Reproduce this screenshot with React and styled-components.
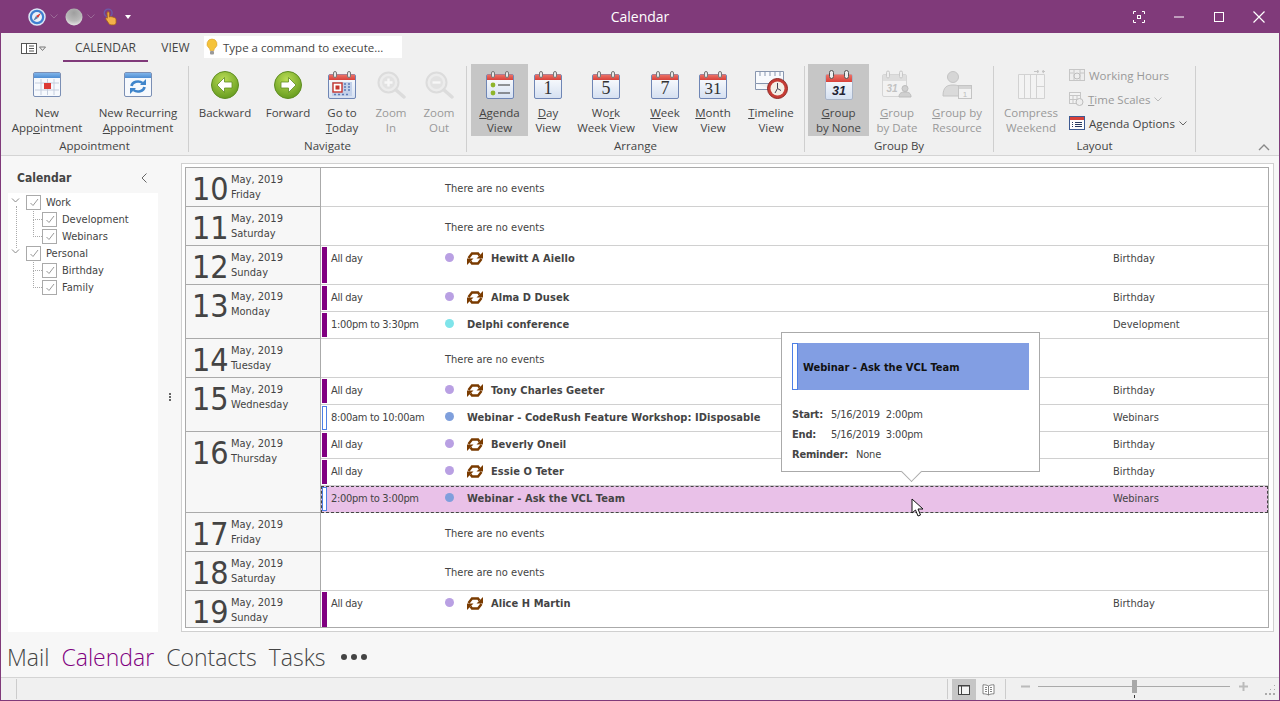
import React from 'react';
import styled, { createGlobalStyle } from 'styled-components';

const GlobalStyle = createGlobalStyle`
  html, body { margin: 0; padding: 0; background: #f7f7f7; }
  body { font-family: "DejaVu Sans Condensed", "DejaVu Sans", sans-serif; font-size: 11px; color: #444; }
`;

const purple = '#803a7a';
const uiFont = '"Open Sans", "Noto Sans", sans-serif';

const Window = styled.div`
  position: relative;
  width: 1280px;
  height: 701px;
  box-sizing: border-box;
  border: 1px solid ${purple};
  border-top: 0;
  display: flex;
  flex-direction: column;
  overflow: hidden;
  background: #f7f7f7;
`;

const TitleBar = styled.div`
  height: 33px;
  margin: 0 -1px;
  background: ${purple};
  display: grid;
  grid-template-columns: 1fr auto 1fr;
  align-items: center;
  color: #fff;
`;
const QuickAccess = styled.div`
  display: flex;
  align-items: center;
  padding-left: 28px;
`;
const QuickIcon = styled.span`
  display: flex;
  width: ${({ $w }) => $w}px;
  align-items: center;
`;
const Title = styled.div`
  font-family: ${uiFont};
  font-size: 14px;
`;
const WindowButtons = styled.div`
  display: flex;
  justify-content: flex-end;
  padding-right: 1px;
`;
const WindowButton = styled.span`
  width: 40px;
  height: 33px;
  display: flex;
  align-items: center;
  justify-content: center;
`;

const TabRow = styled.div`
  height: 31px;
  background: #f0f0f0;
  display: flex;
  font-family: ${uiFont};
  font-size: 12px;
`;
const MenuToggle = styled.span`
  width: 62px;
  display: flex;
  align-items: center;
  padding: 0 0 0 19px;
  box-sizing: border-box;
`;
const Tab = styled.div`
  width: ${({ $w }) => $w}px;
  height: 29px;
  box-sizing: border-box;
  display: flex;
  align-items: center;
  justify-content: center;
  border-bottom: 2px solid ${({ $active }) => ($active ? purple : 'transparent')};
  padding-top: 2px;
`;
const CommandBox = styled.div`
  width: 198px;
  height: 22px;
  margin: 3px 0 0 1px;
  padding-left: 2px;
  box-sizing: border-box;
  background: #fff;
  display: flex;
  align-items: center;
  gap: 5px;
  font-size: 11.5px;
`;

const Ribbon = styled.div`
  height: 92px;
  background: #f0f0f0;
  border-bottom: 1px solid #d4d4d4;
  box-sizing: border-box;
  display: flex;
  font-family: ${uiFont};
  font-size: 11.5px;
  position: relative;
`;
const Group = styled.div`
  width: ${({ $w }) => $w}px;
  box-sizing: border-box;
  height: 88px;
  display: flex;
  flex-direction: column;
  align-items: stretch;
  position: relative;
  &::after {
    content: '';
    position: absolute;
    right: 0;
    top: 2px;
    bottom: 0;
    width: 1px;
    background: #cfcfcf;
  }
`;
const GroupItems = styled.div`
  height: 72px;
  display: flex;
  padding-left: ${({ $pad }) => $pad}px;
`;
const GroupCaption = styled.div`
  text-align: center;
  line-height: 16px;
  height: 16px;
  margin-top: 2px;
  padding-right: 1px;
`;
const BigButton = styled.div`
  width: ${({ $w }) => $w}px;
  margin-left: ${({ $gap }) => $gap || 0}px;
  height: 72px;
  box-sizing: border-box;
  padding-top: 6px;
  flex: none;
  display: flex;
  flex-direction: column;
  align-items: center;
  background: ${({ $active }) => ($active ? '#c6c6c6' : 'transparent')};
  color: ${({ $off }) => ($off ? '#999' : '#444')};
  u { text-underline-offset: 1px; }
`;
const BigIcon = styled.div`
  height: 30px;
  margin-bottom: 5px;
  display: flex;
  align-items: center;
`;
const BigLabel = styled.div`
  text-align: center;
  line-height: 15px;
  white-space: nowrap;
`;
const SmallButtons = styled.div`
  display: flex;
  flex-direction: column;
  margin: -1px 0 0 5px;
`;
const SmallButton = styled.div`
  height: 24px;
  display: flex;
  align-items: center;
  gap: 4px;
  color: ${({ $off }) => ($off ? '#999' : '#444')};
  white-space: nowrap;
`;
const Collapse = styled.span`
  position: absolute;
  left: 1257px;
  top: 80px;
  display: flex;
`;

const Main = styled.div`
  height: 482px;
  display: flex;
`;
const NavPanel = styled.div`
  width: 150px;
  margin-left: 7px;
  flex: none;
  display: flex;
  flex-direction: column;
`;
const NavHeader = styled.div`
  height: 37px;
  display: flex;
  align-items: center;
  justify-content: space-between;
  padding: 6px 11px 0 9px;
  box-sizing: border-box;
  font-weight: 700;
  font-size: 12px;
`;
const Tree = styled.div`
  height: 439px;
  background: #fff;
  padding-top: 1px;
  box-sizing: border-box;
`;
const TreeRow = styled.div`
  position: relative;
  height: 17px;
  display: flex;
  align-items: center;
  gap: 5px;
  padding-left: ${({ $child }) => ($child ? 34 : 18)}px;
  &::before {
    content: ${({ $child }) => ($child ? "''" : 'none')};
    position: absolute;
    left: 25px;
    top: ${({ $first }) => ($first ? 0 : -8)}px;
    height: ${({ $first }) => ($first ? 8 : 16)}px;
    width: 8px;
    border-left: 1px dotted #aaa;
    border-bottom: 1px dotted #aaa;
  }
`;
const Expander = styled.span`
  position: absolute;
  left: 3px;
  top: 4px;
  display: flex;
`;
const TreeLine = styled.span`
  position: absolute;
  left: 8px;
  top: 12px;
  height: 42px;
  border-left: 1px dotted #aaa;
`;
const CheckBox = styled.span`
  width: 15px;
  height: 15px;
  box-sizing: border-box;
  border: 1px solid #aaa;
  background: #fff;
  display: flex;
  align-items: center;
  justify-content: center;
`;
const Splitter = styled.div`
  width: 23px;
  flex: none;
  display: flex;
  align-items: center;
  justify-content: center;
  padding-top: 1px;
  box-sizing: border-box;
  flex-direction: column;
  i {
    display: block;
    width: 2px;
    height: 2px;
    margin-bottom: 1px;
    background: #666;
  }
`;
const Scheduler = styled.div`
  width: 1093px;
  height: 469px;
  margin-top: 7px;
  flex: none;
  box-sizing: border-box;
  border: 1px solid #d0d0d0;
  background: #fff;
  padding: 3px 4px 3px 3px;
`;
const Agenda = styled.div`
  height: 461px;
  box-sizing: border-box;
  border: 1px solid #aaa;
  overflow: hidden;
`;
const Day = styled.div`
  display: grid;
  grid-template-columns: 135px 1fr;
  grid-template-rows: minmax(0, 1fr);
  height: ${({ $rows }) => ($rows === 1 ? 39 : $rows * 27)}px;
`;
const DateCell = styled.div`
  background: #f7f7f7;
  border-right: 1px solid #aaa;
  border-bottom: 1px solid #aaa;
  display: flex;
  padding: 3px 0 0 6px;
  box-sizing: border-box;
`;
const DayNumber = styled.div`
  width: 39px;
  height: 30px;
  margin-top: 3px;
  font-size: 32px;
  line-height: 30px;
`;
const DateText = styled.div`
  line-height: 15px;
  padding-top: 1px;
`;
const Events = styled.div`
  display: flex;
  flex-direction: column;
  min-height: 0;
`;
const EventRow = styled.div`
  flex: 1;
  box-sizing: border-box;
  border-bottom: 1px solid #d0d0d0;
  display: grid;
  grid-template-columns: 6px 118px 22px 646px 1fr;
  align-items: start;
  ${({ $selected }) => $selected && `
    background: #e9c1e8;
    outline: 1px dashed #444;
    outline-offset: -1px;
  `}
`;
const Bar = styled.span`
  margin: 1px 0 1px 1px;
  align-self: stretch;
  box-sizing: border-box;
  background: ${({ $hollow }) => ($hollow ? '#fff' : '#800080')};
  border: ${({ $hollow }) => ($hollow ? '1px solid #4d7fe5' : '0')};
`;
const Time = styled.span`
  padding: 6px 0 0 4px;
  line-height: 13px;
  letter-spacing: -0.3px;
`;
const Dot = styled.span`
  width: 9px;
  height: 9px;
  margin-top: 7px;
  border-radius: 50%;
  background: ${({ $color }) => $color};
`;
const Subject = styled.span`
  display: flex;
  align-items: center;
  gap: 8px;
  padding-top: 4px;
  height: 17px;
  font-weight: 700;
  letter-spacing: 0.06px;
`;
const Resource = styled.span`
  padding-top: 6px;
  line-height: 13px;
`;
const NoEvents = styled.div`
  padding: 14px 0 0 124px;
  line-height: 13px;
  box-sizing: border-box;
  height: 100%;
  border-bottom: 1px solid #d0d0d0;
`;

const Popup = styled.div`
  position: absolute;
  left: 780px;
  top: 332px;
  width: 259px;
  height: 140px;
  box-sizing: border-box;
  border: 1px solid #aaa;
  background: #fff;
  padding: 10px;
  &::after {
    content: '';
    position: absolute;
    left: 122px;
    top: 131px;
    width: 14px;
    height: 14px;
    background: #fff;
    border-right: 1px solid #aaa;
    border-bottom: 1px solid #aaa;
    transform: rotate(45deg);
  }
`;
const PopupHeader = styled.div`
  height: 47px;
  width: 237px;
  background: #829ee3;
  display: flex;
  align-items: center;
  gap: 5px;
  font-weight: 700;
  color: #111;
`;
const PopupMark = styled.span`
  width: 6px;
  height: 47px;
  box-sizing: border-box;
  background: #fff;
  border: 1px solid #4d7fe5;
`;
const PopupTitle = styled.span`
  padding-top: 1px;
`;
const PopupDetails = styled.div`
  margin-top: 14px;
  display: flex;
  flex-direction: column;
`;
const PopupLine = styled.div`
  height: 20px;
  display: flex;
  align-items: center;
  white-space: pre;
  letter-spacing: -0.2px;
  b { width: ${({ $label }) => $label}px; flex: none; }
`;
const Pointer = styled.span`
  position: absolute;
  left: 910px;
  top: 498px;
  display: flex;
  z-index: 3;
`;

const NavBar = styled.div`
  height: 39px;
  display: flex;
  align-items: center;
  gap: 12px;
  padding: 0 0 1px 6px;
  box-sizing: border-box;
  font-family: "Open Sans", sans-serif;
  font-weight: 300;
  font-size: 23px;
  color: #444;
`;
const NavItem = styled.span`
  color: ${({ $active }) => ($active ? '#800080' : '#444')};
`;
const NavMore = styled.span`
  display: flex;
  gap: 4px;
  margin-left: 3px;
  i { width: 6px; height: 6px; border-radius: 50%; background: #444; display: block; }
`;

const StatusBar = styled.div`
  flex: 1;
  background: #f0f0f0;
  border-top: 1px solid #d4d4d4;
  display: flex;
  align-items: stretch;
  padding: 1px 0 0 15px;
`;
const StatusSep = styled.span`
  width: 1px;
  margin-bottom: 1px;
  background: #ccc;
`;
const StatusFill = styled.span`
  flex: 1;
`;
const ViewButton = styled.span`
  width: 24px;
  display: flex;
  align-items: center;
  justify-content: center;
  background: ${({ $active }) => ($active ? '#c6c6c6' : 'transparent')};
`;
const ViewButtons = styled.div`
  display: flex;
  margin: 0 5px 0 4px;
`;
const ZoomPart = styled.div`
  width: 272px;
  margin-left: 1px;
  position: relative;
`;
const ZoomTrack = styled.span`
  position: absolute;
  left: 31px;
  top: 7px;
  width: 192px;
  height: 1px;
  background: #aaa;
`;
const ZoomThumb = styled.span`
  position: absolute;
  left: 125px;
  top: 1px;
  width: 5px;
  height: 13px;
  background: #a8a8a8;
  &::after {
    content: '';
    position: absolute;
    left: 2px;
    top: 15px;
    width: 1px;
    height: 3px;
    background: #333;
  }
`;
const ZoomSign = styled.span`
  position: absolute;
  left: ${({ $x }) => $x}px;
  top: 3px;
  display: flex;
`;

const Defs = () => (
  <defs>
    <linearGradient id="calBody" x1="0" y1="0" x2="0" y2="1">
      <stop offset="0" stopColor="#ffffff" />
      <stop offset="1" stopColor="#d5e0f1" />
    </linearGradient>
    <linearGradient id="calTop" x1="0" y1="0" x2="0" y2="1">
      <stop offset="0" stopColor="#ee7468" />
      <stop offset="1" stopColor="#d8413a" />
    </linearGradient>
    <linearGradient id="blueTop" x1="0" y1="0" x2="0" y2="1">
      <stop offset="0" stopColor="#7fb4ea" />
      <stop offset="1" stopColor="#4e8dd2" />
    </linearGradient>
    <radialGradient id="greenBall" cx="0.45" cy="0.3" r="0.8">
      <stop offset="0" stopColor="#b9dc55" />
      <stop offset="1" stopColor="#5b9317" />
    </radialGradient>
  </defs>
);

const CalendarIcon = ({ children }) => (
  <svg width="30" height="30" viewBox="0 0 30 30">
    <Defs />
    <rect x="1.500" y="4.500" width="27" height="24" rx="1.500" fill="url(#calBody)" stroke="#6f86b5" />
    <path d="M2 5.500a1 1 0 0 1 1-1h24a1 1 0 0 1 1 1V10H2z" fill="url(#calTop)" />
    <rect x="6.500" y="1.500" width="3" height="6" rx="1.500" fill="#e8e8e8" stroke="#777" />
    <rect x="20.500" y="1.500" width="3" height="6" rx="1.500" fill="#e8e8e8" stroke="#777" />
    {children}
  </svg>
);

const NumberCalendar = ({ value }) => (
  <CalendarIcon>
    <text x="15" y="24" textAnchor="middle" fontFamily="Liberation Serif, serif" fontSize={value.length > 1 ? 17 : 18} fill="#333">{value}</text>
  </CalendarIcon>
);

const TodayIcon = () => (
  <CalendarIcon>
    <rect x="5" y="12" width="20" height="14" fill="#c3d1ea" />
    <rect x="6" y="13" width="9" height="9" fill="#fff" stroke="#c6362f" strokeWidth="1.400" />
    <rect x="8.500" y="15.500" width="4" height="4" fill="#c6362f" />
    <path d="M17 14h2M21 14h2M17 17h2M21 17h2M17 20h2M21 20h2M7 24.500h2M11 24.500h2M15 24.500h2M19 24.500h2" stroke="#5c7bb6" strokeWidth="1.400" />
  </CalendarIcon>
);

const AgendaIcon = () => (
  <CalendarIcon>
    <circle cx="8" cy="15" r="2.400" fill="#8fb52c" />
    <circle cx="8" cy="23" r="2.400" fill="#8fb52c" />
    <path d="M13 15h12M13 23h12" stroke="#333" strokeWidth="1.200" />
  </CalendarIcon>
);

const PlainCalendar = ({ recur }) => (
  <svg width="30" height="30" viewBox="0 0 30 30">
    <Defs />
    <rect x="1.500" y="2.500" width="27" height="24" rx="1.500" fill="#f6f9fd" stroke="#7b8fb4" />
    <rect x="2" y="3" width="26" height="5" fill="url(#blueTop)" />
    {recur ? (
      <g fill="none" stroke="#3f85cb" strokeWidth="2.600">
        <path d="M8.500 16a6.500 5 0 0 1 11-3" />
        <path d="M21.500 17a6.500 5 0 0 1-11 3" />
        <path d="M23 9v6h-6z" fill="#3f85cb" stroke="none" />
        <path d="M7 24v-6h6z" fill="#3f85cb" stroke="none" />
      </g>
    ) : (
      <>
        <path d="M3 13h24M3 20h24M9 9v16M15.500 9v16M22 9v16" stroke="#c5cede" />
        <rect x="12" y="13" width="7" height="6" fill="#dc3a36" />
      </>
    )}
  </svg>
);

const ArrowBall = ({ flip }) => (
  <svg width="30" height="30" viewBox="0 0 30 30">
    <Defs />
    <circle cx="15" cy="15" r="13.500" fill="url(#greenBall)" stroke="#5f8d22" />
    <path
      d={flip ? 'M23 15l-7.500-7.500V12H8v6h7.500v4.500z' : 'M7 15l7.500-7.500V12H22v6h-7.500v4.500z'}
      fill="#fff"
      stroke="#5f8d22"
      strokeWidth="0.800"
    />
  </svg>
);

const ZoomIcon = ({ plus }) => (
  <svg width="30" height="30" viewBox="0 0 30 30">
    <circle cx="12.500" cy="12.500" r="10" fill="#ececec" stroke="#dcdcdc" strokeWidth="2" />
    <circle cx="12.500" cy="12.500" r="6.500" fill="#e2e2e2" />
    <path d={plus ? 'M8.500 12.500h8M12.500 8.500v8' : 'M8.500 12.500h8'} stroke="#f7f7f7" strokeWidth="2.400" />
    <path d="M20 20l8 7" stroke="#dcdcdc" strokeWidth="3.400" strokeLinecap="round" />
  </svg>
);

const TimelineIcon = () => (
  <svg width="34" height="30" viewBox="0 0 34 30">
    <path d="M1.500 1.500h28v12h-28zM1.500 13.500v6h16" fill="#f8fafd" stroke="#8795ae" />
    <path d="M6 1v5M11 1v5M16 1v5M21 1v5M26 1v5" stroke="#8795ae" />
    <circle cx="23.500" cy="18.500" r="10" fill="#c63c35" stroke="#8e2a26" />
    <circle cx="23.500" cy="18.500" r="7" fill="#f4efe6" />
    <path d="M23.500 18.500V13M23.500 18.500l3.500 2M23.500 18.500L21 23" stroke="#445" />
  </svg>
);

const GroupNoneIcon = () => (
  <svg width="30" height="30" viewBox="0 0 30 30">
    <Defs />
    <rect x="1.500" y="4.500" width="27" height="25" rx="1.500" fill="url(#calBody)" stroke="#a9b4c6" />
    <path d="M2 5.500a1 1 0 0 1 1-1h24a1 1 0 0 1 1 1V12H2z" fill="url(#calTop)" />
    <rect x="5.500" y="0.500" width="4" height="8" rx="2" fill="#eee" stroke="#555" />
    <rect x="20.500" y="0.500" width="4" height="8" rx="2" fill="#eee" stroke="#555" />
    <text x="15" y="25" textAnchor="middle" fontFamily="Liberation Sans, sans-serif" fontStyle="italic" fontWeight="700" fontSize="12.500" fill="#223">31</text>
  </svg>
);

const People = ({ x, y }) => (
  <g transform={`translate(${x} ${y})`} fill="#d0d0d0" stroke="#bdbdbd">
    <circle cx="7" cy="3.500" r="3" />
    <path d="M1 12c0-4 2.500-5 6-5s6 1 6 5z" />
  </g>
);

const GroupDateIcon = () => (
  <svg width="32" height="30" viewBox="0 0 32 30">
    <rect x="1.500" y="4.500" width="24" height="22" rx="1.500" fill="#f2f2f2" stroke="#d5d5d5" />
    <path d="M2 5h23v6H2z" fill="#dedede" />
    <rect x="5.500" y="1" width="3" height="7" rx="1.500" fill="#eee" stroke="#c8c8c8" />
    <rect x="18.500" y="1" width="3" height="7" rx="1.500" fill="#eee" stroke="#c8c8c8" />
    <text x="11" y="22" textAnchor="middle" fontFamily="Liberation Sans, sans-serif" fontStyle="italic" fontWeight="700" fontSize="10" fill="#c2c2c2">31</text>
    <People x="17" y="15" />
  </svg>
);

const GroupResourceIcon = () => (
  <svg width="32" height="30" viewBox="0 0 32 30">
    <circle cx="12" cy="7" r="5.500" fill="#d6d6d6" stroke="#c4c4c4" />
    <path d="M2 26c0-9 4-11 10-11s8 2 9 5v6z" fill="#dadada" stroke="#c4c4c4" />
    <rect x="17.500" y="15.500" width="13" height="13" fill="#f2f2f2" stroke="#c4c4c4" />
    <path d="M18 16h12v3H18z" fill="#d4d4d4" />
    <text x="24" y="27" textAnchor="middle" fontFamily="Liberation Sans, sans-serif" fontSize="8" fill="#bdbdbd">1</text>
  </svg>
);

const CompressIcon = () => (
  <svg width="30" height="30" viewBox="0 0 30 30">
    <path d="M2.500 4.500h26v24h-26zM8.500 4.500v24M14.500 4.500v24M20.500 4.500v24M20.500 16.500h8" fill="#f3f3f3" stroke="#d2d2d2" />
    <path d="M18 1.500h4M21 0l2 1.500-2 1.500M29 1.500h-3M28 0l-2 1.500 2 1.500" fill="none" stroke="#c4c4c4" />
  </svg>
);

const WorkingHoursIcon = () => (
  <svg width="16" height="14" viewBox="0 0 16 14">
    <rect x="0.500" y="1.500" width="15" height="11" fill="#ededed" stroke="#c6c6c6" />
    <path d="M5 1.500v11M11 1.500v11M0.500 5h4M11 5h4" stroke="#c6c6c6" />
    <circle cx="8" cy="8" r="3" fill="#eee" stroke="#bdbdbd" />
  </svg>
);

const TimeScalesIcon = () => (
  <svg width="15" height="14" viewBox="0 0 15 14">
    <rect x="0.500" y="0.500" width="11" height="11" fill="#f2f2f2" stroke="#c6c6c6" />
    <path d="M0.500 3.500h11M4 3.500v8M8 3.500v8M0.500 7.500h11" stroke="#c6c6c6" />
    <circle cx="10.500" cy="10" r="3.500" fill="#eee" stroke="#bdbdbd" />
  </svg>
);

const AgendaOptionsIcon = () => (
  <svg width="16" height="14" viewBox="0 0 16 14">
    <rect x="0.500" y="0.500" width="15" height="13" fill="#fdfdfd" stroke="#3d5a92" />
    <rect x="1" y="1" width="14" height="3" fill="#d8413a" />
    <path d="M3 6.500h1M3 8.500h1M3 10.500h1M6 6.500h7M6 8.500h7M6 10.500h7" stroke="#28395f" />
  </svg>
);

const Chevron = ({ color = '#777', size = 8 }) => (
  <svg width={size} height="5" viewBox="0 0 8 5">
    <path d="M0.500 0.500L4 4l3.500-3.500" fill="none" stroke={color} />
  </svg>
);

const RecurIcon = () => (
  <svg width="16" height="15" viewBox="0 0 16 15">
    <path d="M1.500 7L5 2.500h6l1.500 2" fill="none" stroke="#7a3b00" strokeWidth="2.400" />
    <path d="M16 1V7.500H9.500z" fill="#7a3b00" />
    <path d="M14.500 8L11 12.500H5l-1.500-2" fill="none" stroke="#7a3b00" strokeWidth="2.400" />
    <path d="M0 14V7.500H6.500z" fill="#7a3b00" />
  </svg>
);

const Compass = () => (
  <svg width="18" height="18" viewBox="0 0 18 18">
    <circle cx="9" cy="9" r="8" fill="#3f7fd0" stroke="#dce8f6" strokeWidth="1.500" />
    <circle cx="9" cy="9" r="5" fill="#e8f0fa" />
    <path d="M13 5L10 10 8 8z" fill="#d8372f" />
    <path d="M5 13l3-5 2 2z" fill="#5f7fa8" />
  </svg>
);

const Sphere = () => (
  <svg width="18" height="18" viewBox="0 0 18 18">
    <defs>
      <radialGradient id="sphere" cx="0.5" cy="0.25" r="0.8">
        <stop offset="0" stopColor="#9e9e9e" />
        <stop offset="0.6" stopColor="#b9b9b9" />
        <stop offset="1" stopColor="#ededed" />
      </radialGradient>
    </defs>
    <circle cx="9" cy="9" r="8.500" fill="url(#sphere)" />
  </svg>
);

const TouchHand = () => (
  <svg width="16" height="18" viewBox="0 0 14 16">
    <circle cx="4.500" cy="4.500" r="3.500" fill="none" stroke="#6b5aa8" strokeWidth="1.200" />
    <path d="M3.500 4.500c0-1.500 2-1.500 2 0V8l1-.3 1 .1 1 .2 1.500.5c1 .4 1.500 1 1.500 2v2.500c0 1-1 2-2 2H7c-1 0-1.600-.6-2-1.300L2.500 10c-.6-1 .7-1.800 1.300-1z" fill="#f2b04a" stroke="#a45f14" strokeWidth="0.700" />
  </svg>
);

const Bulb = () => (
  <svg width="12" height="18" viewBox="0 0 12 18">
    <path d="M6 1a5 5 0 0 0-3 9c.7.7 1 1.300 1 2.500h4c0-1.200.3-1.800 1-2.500A5 5 0 0 0 6 1z" fill="#f5c33b" stroke="#d9a02a" strokeWidth="0.600" />
    <rect x="4" y="13" width="4" height="3.500" rx="1" fill="#9a9a9a" />
  </svg>
);

const RibbonButton = ({ icon, label, ...rest }) => (
  <BigButton {...rest}>
    <BigIcon>{icon}</BigIcon>
    <BigLabel>{label}</BigLabel>
  </BigButton>
);

const days = [
  { n: 10, w: 'Friday' },
  { n: 11, w: 'Saturday' },
  { n: 12, w: 'Sunday', events: [{ time: 'All day', name: 'Hewitt A Aiello', res: 'Birthday', birthday: true }] },
  {
    n: 13,
    w: 'Monday',
    events: [
      { time: 'All day', name: 'Alma D Dusek', res: 'Birthday', birthday: true },
      { time: '1:00pm to 3:30pm', name: 'Delphi conference', res: 'Development', color: '#7fe4ea' },
    ],
  },
  { n: 14, w: 'Tuesday' },
  {
    n: 15,
    w: 'Wednesday',
    events: [
      { time: 'All day', name: 'Tony Charles Geeter', res: 'Birthday', birthday: true },
      { time: '8:00am to 10:00am', name: 'Webinar - CodeRush Feature Workshop: IDisposable', res: 'Webinars', color: '#7f9fdc', hollow: true },
    ],
  },
  {
    n: 16,
    w: 'Thursday',
    events: [
      { time: 'All day', name: 'Beverly Oneil', res: 'Birthday', birthday: true },
      { time: 'All day', name: 'Essie O Teter', res: 'Birthday', birthday: true },
      { time: '2:00pm to 3:00pm', name: 'Webinar - Ask the VCL Team', res: 'Webinars', color: '#7f9fdc', hollow: true, selected: true },
    ],
  },
  { n: 17, w: 'Friday' },
  { n: 18, w: 'Saturday' },
  { n: 19, w: 'Sunday', events: [{ time: 'All day', name: 'Alice H Martin', res: 'Birthday', birthday: true }] },
];

const tree = [
  { label: 'Work', parent: true },
  { label: 'Development', first: true },
  { label: 'Webinars' },
  { label: 'Personal', parent: true },
  { label: 'Birthday', first: true },
  { label: 'Family' },
];

const Check = () => (
  <svg width="10" height="9" viewBox="0 0 10 9">
    <path d="M1.500 5l2.500 2.500L9 1" fill="none" stroke="#999" />
  </svg>
);

export default function App() {
  return (
    <Window>
      <GlobalStyle />
      <TitleBar>
        <QuickAccess>
          <QuickIcon $w={22}><Compass /></QuickIcon>
          <QuickIcon $w={15}><Chevron color="#9a6a96" /></QuickIcon>
          <QuickIcon $w={22}><Sphere /></QuickIcon>
          <QuickIcon $w={16}><Chevron color="#9a6a96" /></QuickIcon>
          <QuickIcon $w={22}><TouchHand /></QuickIcon>
          <svg width="6" height="4" viewBox="0 0 6 4"><path d="M0 0h6L3 4z" fill="#fff" /></svg>
        </QuickAccess>
        <Title>Calendar</Title>
        <WindowButtons>
          <WindowButton>
            <svg width="12" height="12" viewBox="0 0 12 12">
              <path d="M0.500 3V0.500H3M9 0.500h2.500V3M11.500 9v2.500H9M3 11.500H0.500V9" fill="none" stroke="#fff" />
              <rect x="4.500" y="4.500" width="3" height="3" fill="none" stroke="#fff" />
            </svg>
          </WindowButton>
          <WindowButton>
            <svg width="10" height="2" viewBox="0 0 10 2"><path d="M0 1h10" stroke="#fff" /></svg>
          </WindowButton>
          <WindowButton>
            <svg width="10" height="10" viewBox="0 0 10 10"><rect x="0.500" y="0.500" width="9" height="9" fill="none" stroke="#fff" /></svg>
          </WindowButton>
          <WindowButton>
            <svg width="12" height="12" viewBox="0 0 12 12"><path d="M0.500 0.500l11 11M11.500 0.500l-11 11" stroke="#fff" strokeWidth="1.200" /></svg>
          </WindowButton>
        </WindowButtons>
      </TitleBar>

      <TabRow>
        <MenuToggle>
          <svg width="26" height="13" viewBox="0 0 26 13">
            <rect x="1.500" y="1.500" width="15" height="10" fill="#fff" stroke="#555" />
            <path d="M6.500 1.500v10M9 4h5M9 6.500h5M9 9h5" stroke="#555" />
            <path d="M19.500 5l3 3.500 3-3.500z" fill="none" stroke="#777" />
          </svg>
        </MenuToggle>
        <Tab $w={85} $active>CALENDAR</Tab>
        <Tab $w={55}>VIEW</Tab>
        <CommandBox><Bulb />Type a command to execute...</CommandBox>
      </TabRow>

      <Ribbon>
        <Group $w={188}>
          <GroupItems $pad={7}>
            <RibbonButton $w={78} icon={<PlainCalendar />} label={<>New<br />App<u>o</u>intment</>} />
            <RibbonButton $w={88} $gap={8} icon={<PlainCalendar recur />} label={<>New Recurring<br /><u>A</u>ppointment</>} />
          </GroupItems>
          <GroupCaption>Appointment</GroupCaption>
        </Group>
        <Group $w={278}>
          <GroupItems $pad={6}>
            <RibbonButton $w={60} icon={<ArrowBall />} label="Backward" />
            <RibbonButton $w={60} $gap={3} icon={<ArrowBall flip />} label="Forward" />
            <RibbonButton $w={44} $gap={2} icon={<TodayIcon />} label={<>Go to<br /><u>T</u>oday</>} />
            <RibbonButton $w={46} $gap={4} $off icon={<ZoomIcon plus />} label={<>Zoom<br />In</>} />
            <RibbonButton $w={46} $gap={2} $off icon={<ZoomIcon />} label={<>Zoom<br />Out</>} />
          </GroupItems>
          <GroupCaption>Navigate</GroupCaption>
        </Group>
        <Group $w={338}>
          <GroupItems $pad={4}>
            <RibbonButton $w={57} $active icon={<AgendaIcon />} label={<><u>A</u>genda<br />View</>} />
            <RibbonButton $w={40} icon={<NumberCalendar value="1" />} label={<><u>D</u>ay<br />View</>} />
            <RibbonButton $w={68} $gap={4} icon={<NumberCalendar value="5" />} label={<>Wo<u>r</u>k<br />Week View</>} />
            <RibbonButton $w={48} $gap={1} icon={<NumberCalendar value="7" />} label={<><u>W</u>eek<br />View</>} />
            <RibbonButton $w={48} icon={<NumberCalendar value="31" />} label={<><u>M</u>onth<br />View</>} />
            <RibbonButton $w={64} $gap={2} icon={<TimelineIcon />} label={<><u>T</u>imeline<br />View</>} />
          </GroupItems>
          <GroupCaption>Arrange</GroupCaption>
        </Group>
        <Group $w={189}>
          <GroupItems $pad={3}>
            <RibbonButton $w={61} $active icon={<GroupNoneIcon />} label={<><u>G</u>roup<br />by None</>} />
            <RibbonButton $w={56} $off icon={<GroupDateIcon />} label={<><u>G</u>roup<br />by Date</>} />
            <RibbonButton $w={64} $off icon={<GroupResourceIcon />} label={<><u>G</u>roup by<br />Resource</>} />
          </GroupItems>
          <GroupCaption>Group By</GroupCaption>
        </Group>
        <Group $w={202}>
          <GroupItems $pad={4}>
            <RibbonButton $w={66} $off icon={<CompressIcon />} label={<>Compress<br />Weekend</>} />
            <SmallButtons>
              <SmallButton $off><WorkingHoursIcon />Working Hours</SmallButton>
              <SmallButton $off><TimeScalesIcon /><span><u>T</u>ime Scales</span><Chevron color="#bbb" /></SmallButton>
              <SmallButton><AgendaOptionsIcon />Agenda Options<Chevron color="#666" /></SmallButton>
            </SmallButtons>
          </GroupItems>
          <GroupCaption>Layout</GroupCaption>
        </Group>
        <Collapse>
          <svg width="12" height="7" viewBox="0 0 12 7"><path d="M1 6l5-5 5 5" fill="none" stroke="#888" strokeWidth="1.400" /></svg>
        </Collapse>
      </Ribbon>

      <Main>
        <NavPanel>
          <NavHeader>
            Calendar
            <svg width="6" height="10" viewBox="0 0 6 10"><path d="M5.500 0.500L1 5l4.500 4.500" fill="none" stroke="#666" /></svg>
          </NavHeader>
          <Tree>
            {tree.map((t) => (
              <TreeRow key={t.label} $child={!t.parent} $first={t.first}>
                {t.parent && <Expander><Chevron color="#888" size={9} /></Expander>}
                {t.label === 'Work' && <TreeLine />}
                <CheckBox><Check /></CheckBox>
                {t.label}
              </TreeRow>
            ))}
          </Tree>
        </NavPanel>
        <Splitter><i /><i /><i /></Splitter>
        <Scheduler>
          <Agenda>
            {days.map((d) => (
              <Day key={d.n} $rows={d.events && d.events.length > 1 ? d.events.length : 1}>
                <DateCell>
                  <DayNumber>{d.n}</DayNumber>
                  <DateText>May, 2019<br />{d.w}</DateText>
                </DateCell>
                <Events>
                  {!d.events && <NoEvents>There are no events</NoEvents>}
                  {d.events && d.events.map((e) => (
                    <EventRow key={e.name} $selected={e.selected}>
                      <Bar $hollow={e.hollow} />
                      <Time>{e.time}</Time>
                      <Dot $color={e.color || '#b9a0e3'} />
                      <Subject>
                        {e.birthday && <RecurIcon />}
                        {e.name}
                      </Subject>
                      <Resource>{e.res}</Resource>
                    </EventRow>
                  ))}
                </Events>
              </Day>
            ))}
          </Agenda>
        </Scheduler>
      </Main>

      <NavBar>
        <NavItem>Mail</NavItem>
        <NavItem $active>Calendar</NavItem>
        <NavItem>Contacts</NavItem>
        <NavItem>Tasks</NavItem>
        <NavMore><i /><i /><i /></NavMore>
      </NavBar>

      <StatusBar>
        <StatusSep />
        <StatusFill />
        <StatusSep />
        <ViewButtons>
          <ViewButton $active>
            <svg width="12" height="10" viewBox="0 0 12 10"><rect x="0.500" y="0.500" width="11" height="9" fill="#f4f4f4" stroke="#444" /><path d="M3.500 0.500v9M0.500 1h11" stroke="#444" /></svg>
          </ViewButton>
          <ViewButton>
            <svg width="13" height="12" viewBox="0 0 13 12"><path d="M6.500 2C5 1 3 .8 1 .8v9c2 0 4 .2 5.500 1.200C8 10 10 9.800 12 9.800v-9C10 .8 8 1 6.500 2zM6.500 2v9M3 3.500h2M3 5.500h2M3 7.500h2M8 3.500h2M8 5.500h2M8 7.500h2" fill="#fff" stroke="#666" strokeWidth="0.800" /></svg>
          </ViewButton>
        </ViewButtons>
        <StatusSep />
        <ZoomPart>
          <ZoomSign $x={14}><svg width="9" height="9" viewBox="0 0 9 9"><path d="M0 4.500h9" stroke="#bbb" strokeWidth="2" /></svg></ZoomSign>
          <ZoomTrack />
          <ZoomThumb />
          <ZoomSign $x={232}><svg width="9" height="9" viewBox="0 0 9 9"><path d="M0 4.500h9M4.500 0v9" stroke="#bbb" strokeWidth="2" /></svg></ZoomSign>
          <ZoomSign $x={257}>
            <svg width="12" height="14" viewBox="0 0 12 14"><path d="M10 3h1v1h-1zM6 7h1v1H6zM10 7h1v1h-1zM1 11h2v2H1zM5 11h2v2H5zM9 11h2v2H9z" fill="#aaa" /></svg>
          </ZoomSign>
        </ZoomPart>
      </StatusBar>

      <Popup>
        <PopupHeader><PopupMark /><PopupTitle>Webinar - Ask the VCL Team</PopupTitle></PopupHeader>
        <PopupDetails>
          <PopupLine $label={39}><b>Start:</b>5/16/2019  2:00pm</PopupLine>
          <PopupLine $label={39}><b>End:</b>5/16/2019  3:00pm</PopupLine>
          <PopupLine $label={64}><b>Reminder:</b>None</PopupLine>
        </PopupDetails>
      </Popup>
      <Pointer>
        <svg width="13" height="20" viewBox="0 0 13 20">
          <path d="M1 1v14l3.500-3 2.500 6 2.500-1-2.500-6H12z" fill="#fff" stroke="#111" />
        </svg>
      </Pointer>
    </Window>
  );
}
